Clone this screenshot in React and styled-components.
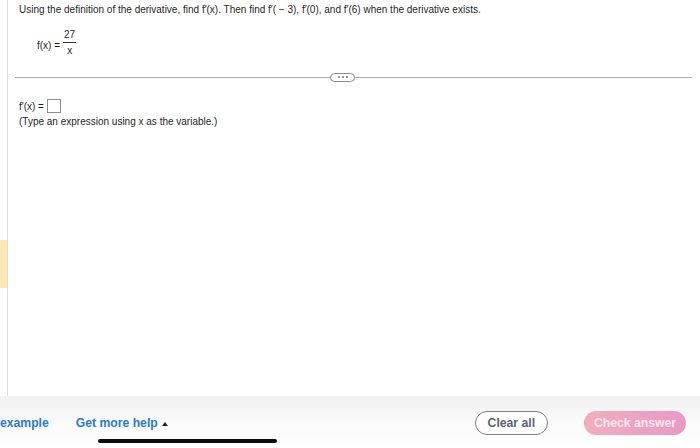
import React from 'react';
import styled, { createGlobalStyle } from 'styled-components';

const Global = createGlobalStyle`
    html, body {
        margin: 0;
        height: 100%;
        background: #ffffff;
    }
    body {
        font-family: "Liberation Sans", Arial, sans-serif;
        color: #222;
        overflow: hidden;
    }
`;

const Page = styled.div`
    position: relative;
    width: 700px;
    height: 448px;
    display: flex;
    flex-direction: column;
`;

const Workspace = styled.div`
    flex: 1;
    display: flex;
    flex-direction: row;
`;

const Gutter = styled.div`
    width: 7px;
    display: flex;
    flex-direction: column;
    padding-top: 240px;
`;

const Marker = styled.div`
    height: 48px;
    background: #fce8b6;
`;

const Content = styled.div`
    flex: 1;
    border-left: 1px solid #dcdcdc;
    display: flex;
    flex-direction: column;
`;

const Question = styled.div`
    padding: 4px 0 0 11px;
    font-size: 10px;
    line-height: 12px;
    color: #1f1f1f;
    white-space: nowrap;
`;

const Formula = styled.div`
    display: flex;
    align-items: center;
    gap: 2px;
    padding: 14px 0 0 29px;
    font-size: 10px;
    color: #1f1f1f;
`;

const Lhs = styled.span`
    padding-top: 4px;
`;

const Fraction = styled.span`
    display: inline-flex;
    flex-direction: column;
    align-items: center;
    margin-left: 1px;
`;

const Numer = styled.span`
    padding: 0 1px 2px;
    line-height: 10px;
    border-bottom: 1px solid #333;
`;

const Denom = styled.span`
    padding-top: 3px;
    line-height: 10px;
`;

const Divider = styled.div`
    display: flex;
    align-items: center;
    margin: 16px 8px 0 7px;
    height: 10px;
`;

const Rule = styled.div`
    flex: ${p => p.grow};
    height: 1px;
    background: #a9a9a9;
`;

const Expander = styled.div`
    width: 23px;
    height: 7px;
    border: 1px solid #8a8a8a;
    border-radius: 5px;
    display: flex;
    align-items: center;
    justify-content: center;
    gap: 2px;
`;

const Dot = styled.span`
    width: 2px;
    height: 2px;
    border-radius: 1px;
    background: #7a7a7a;
`;

const Answer = styled.div`
    padding: 17px 0 0 11px;
    font-size: 10px;
    color: #1f1f1f;
`;

const AnswerRow = styled.div`
    display: flex;
    align-items: center;
    gap: 2px;
    height: 14px;
`;

const InputBox = styled.span`
    display: inline-block;
    width: 12px;
    height: 12px;
    border: 1px solid #8c8c8c;
    margin-left: 1px;
`;

const Hint = styled.div`
    margin-top: 3px;
    line-height: 12px;
`;

const Footer = styled.div`
    height: 52px;
    display: flex;
    flex-direction: row;
    align-items: center;
    padding-top: 2px;
    box-sizing: border-box;
    background: linear-gradient(#f1f1f1, #fbfbfb 60%, #ffffff);
`;

const HelpLink = styled.span`
    font-size: 12.2px;
    font-weight: bold;
    color: #2a7bc9;
    margin-left: ${p => p.offset}px;
    display: flex;
    align-items: center;
    gap: 4px;
`;

const Caret = styled.span`
    width: 0;
    height: 0;
    border-left: 3px solid transparent;
    border-right: 3px solid transparent;
    border-bottom: 4px solid #222;
    margin-top: 2px;
`;

const Spacer = styled.div`
    flex: 1;
`;

const PillButton = styled.div`
    height: 24px;
    box-sizing: border-box;
    padding: 0 ${p => (p.primary ? 9 : 12)}px;
    border-radius: 12px;
    display: flex;
    align-items: center;
    font-size: 12.2px;
    font-weight: bold;
    margin-right: ${p => p.gap}px;
    color: ${p => (p.primary ? '#fde7ef' : '#5c6270')};
    border: 1.5px solid ${p => (p.primary ? 'transparent' : '#7c7f86')};
    background: ${p => (p.primary ? 'linear-gradient(90deg, #f1aebd, #e89ac5)' : '#ffffff')};
`;

const HomeBar = styled.div`
    position: absolute;
    left: 98px;
    bottom: 5px;
    width: 179px;
    height: 4px;
    border-radius: 2px;
    background: #0c0c0c;
`;

const App = () => {
    return (
        <Page>
            <Global />
            <Workspace>
                <Gutter>
                    <Marker />
                </Gutter>
                <Content>
                    <Question>
                        Using the definition of the derivative, find f′(x). Then find f′( − 3), f′(0), and f′(6) when the derivative exists.
                    </Question>
                    <Formula>
                        <Lhs>f(x) =</Lhs>
                        <Fraction>
                            <Numer>27</Numer>
                            <Denom>x</Denom>
                        </Fraction>
                    </Formula>
                    <Divider>
                        <Rule grow={315} />
                        <Expander>
                            <Dot /><Dot /><Dot />
                        </Expander>
                        <Rule grow={337} />
                    </Divider>
                    <Answer>
                        <AnswerRow>
                            f′(x) =<InputBox />
                        </AnswerRow>
                        <Hint>(Type an expression using x as the variable.)</Hint>
                    </Answer>
                </Content>
            </Workspace>
            <Footer>
                <HelpLink offset={0}>example</HelpLink>
                <HelpLink offset={27}>Get more help <Caret /></HelpLink>
                <Spacer />
                <PillButton gap={36}>Clear all</PillButton>
                <PillButton primary gap={14}>Check answer</PillButton>
            </Footer>
            <HomeBar />
        </Page>
    );
};

export default App;
